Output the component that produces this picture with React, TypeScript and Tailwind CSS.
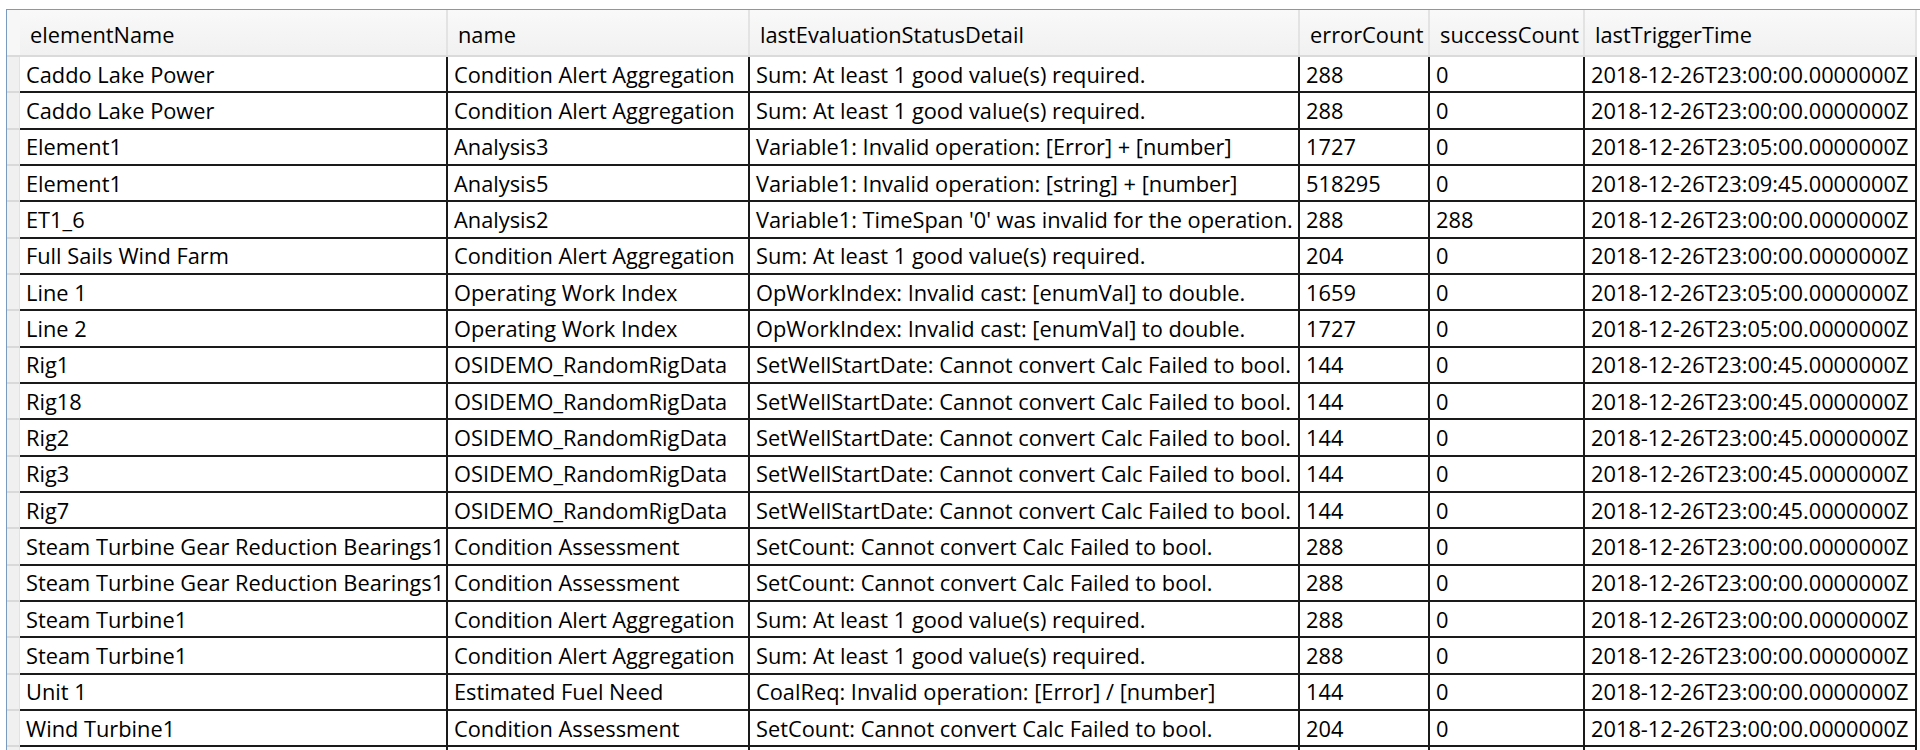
import React from "react";

type Row = {
  elementName: string;
  name: string;
  detail: string;
  errorCount: string;
  successCount: string;
  lastTriggerTime: string;
};

const SUM = "Sum: At least 1 good value(s) required.";
const RIG = "SetWellStartDate: Cannot convert Calc Failed to bool.";
const SETCOUNT = "SetCount: Cannot convert Calc Failed to bool.";
const OPWORK = "OpWorkIndex: Invalid cast: [enumVal] to double.";
const T0 = "2018-12-26T23:00:00.0000000Z";
const T5 = "2018-12-26T23:05:00.0000000Z";
const T45 = "2018-12-26T23:00:45.0000000Z";

const rows: Row[] = [
  { elementName: "Caddo Lake Power", name: "Condition Alert Aggregation", detail: SUM, errorCount: "288", successCount: "0", lastTriggerTime: T0 },
  { elementName: "Caddo Lake Power", name: "Condition Alert Aggregation", detail: SUM, errorCount: "288", successCount: "0", lastTriggerTime: T0 },
  { elementName: "Element1", name: "Analysis3", detail: "Variable1: Invalid operation: [Error] + [number]", errorCount: "1727", successCount: "0", lastTriggerTime: T5 },
  { elementName: "Element1", name: "Analysis5", detail: "Variable1: Invalid operation: [string] + [number]", errorCount: "518295", successCount: "0", lastTriggerTime: "2018-12-26T23:09:45.0000000Z" },
  { elementName: "ET1_6", name: "Analysis2", detail: "Variable1: TimeSpan '0' was invalid for the operation.", errorCount: "288", successCount: "288", lastTriggerTime: T0 },
  { elementName: "Full Sails Wind Farm", name: "Condition Alert Aggregation", detail: SUM, errorCount: "204", successCount: "0", lastTriggerTime: T0 },
  { elementName: "Line 1", name: "Operating Work Index", detail: OPWORK, errorCount: "1659", successCount: "0", lastTriggerTime: T5 },
  { elementName: "Line 2", name: "Operating Work Index", detail: OPWORK, errorCount: "1727", successCount: "0", lastTriggerTime: T5 },
  { elementName: "Rig1", name: "OSIDEMO_RandomRigData", detail: RIG, errorCount: "144", successCount: "0", lastTriggerTime: T45 },
  { elementName: "Rig18", name: "OSIDEMO_RandomRigData", detail: RIG, errorCount: "144", successCount: "0", lastTriggerTime: T45 },
  { elementName: "Rig2", name: "OSIDEMO_RandomRigData", detail: RIG, errorCount: "144", successCount: "0", lastTriggerTime: T45 },
  { elementName: "Rig3", name: "OSIDEMO_RandomRigData", detail: RIG, errorCount: "144", successCount: "0", lastTriggerTime: T45 },
  { elementName: "Rig7", name: "OSIDEMO_RandomRigData", detail: RIG, errorCount: "144", successCount: "0", lastTriggerTime: T45 },
  { elementName: "Steam Turbine Gear Reduction Bearings1", name: "Condition Assessment", detail: SETCOUNT, errorCount: "288", successCount: "0", lastTriggerTime: T0 },
  { elementName: "Steam Turbine Gear Reduction Bearings1", name: "Condition Assessment", detail: SETCOUNT, errorCount: "288", successCount: "0", lastTriggerTime: T0 },
  { elementName: "Steam Turbine1", name: "Condition Alert Aggregation", detail: SUM, errorCount: "288", successCount: "0", lastTriggerTime: T0 },
  { elementName: "Steam Turbine1", name: "Condition Alert Aggregation", detail: SUM, errorCount: "288", successCount: "0", lastTriggerTime: T0 },
  { elementName: "Unit 1", name: "Estimated Fuel Need", detail: "CoalReq: Invalid operation: [Error] / [number]", errorCount: "144", successCount: "0", lastTriggerTime: T0 },
  { elementName: "Wind Turbine1", name: "Condition Assessment", detail: SETCOUNT, errorCount: "204", successCount: "0", lastTriggerTime: T0 },
  { elementName: "", name: "", detail: "", errorCount: "", successCount: "", lastTriggerTime: "" },
];

const columns: { key: keyof Row; label: string }[] = [
  { key: "elementName", label: "elementName" },
  { key: "name", label: "name" },
  { key: "detail", label: "lastEvaluationStatusDetail" },
  { key: "errorCount", label: "errorCount" },
  { key: "successCount", label: "successCount" },
  { key: "lastTriggerTime", label: "lastTriggerTime" },
];

// column widths include the right grid line
const gridCols = "grid grid-cols-[428px_302px_550px_130px_155px_332px]";

export default function App() {
  return (
    <div
      className="w-[1920px] h-[750px] overflow-hidden bg-white pt-[9px] pl-[6px] text-black"
      style={{ fontFamily: '"Segoe UI", "Open Sans", "Noto Sans", sans-serif' }}
    >
      <div className="flex border-t border-l border-[#7b9ac0] h-full">
        {/* row header strip */}
        <div className="w-[13px] shrink-0 bg-[#f0f0f0] flex flex-col">
          <div className="h-[47px] shrink-0 border-b-2 border-[#dadada] bg-[#f7f7f7]" />
          {rows.map((_, i) => (
            <div key={i} className="h-[36.33px] shrink-0 border-b-2 border-[#d9d9d9] border-r border-r-[#e2e2e2]" />
          ))}
        </div>

        <div className="flex flex-col">
          {/* column headers */}
          <div className={`${gridCols} h-[47px] shrink-0 bg-gradient-to-b from-[#f9f9f9] to-[#f1f1f1] border-b-2 border-[#dadada]`}>
            {columns.map((c) => (
              <div
                key={c.key}
                className="flex items-center pl-[10px] pt-[5px] border-r-2 border-[#e3e3e3] text-[21.8px] whitespace-nowrap overflow-hidden"
              >
                {c.label}
              </div>
            ))}
          </div>

          {/* data rows */}
          {rows.map((r, i) => (
            <div key={i} className={`${gridCols} h-[36.33px] shrink-0`}>
              {columns.map((c) => (
                <div
                  key={c.key}
                  className="flex items-center pl-[6px] pt-[2px] border-r-2 border-b-2 border-[#1a1a1a] text-[21.8px] whitespace-nowrap overflow-hidden"
                >
                  {r[c.key]}
                </div>
              ))}
            </div>
          ))}
        </div>
      </div>
    </div>
  );
}
